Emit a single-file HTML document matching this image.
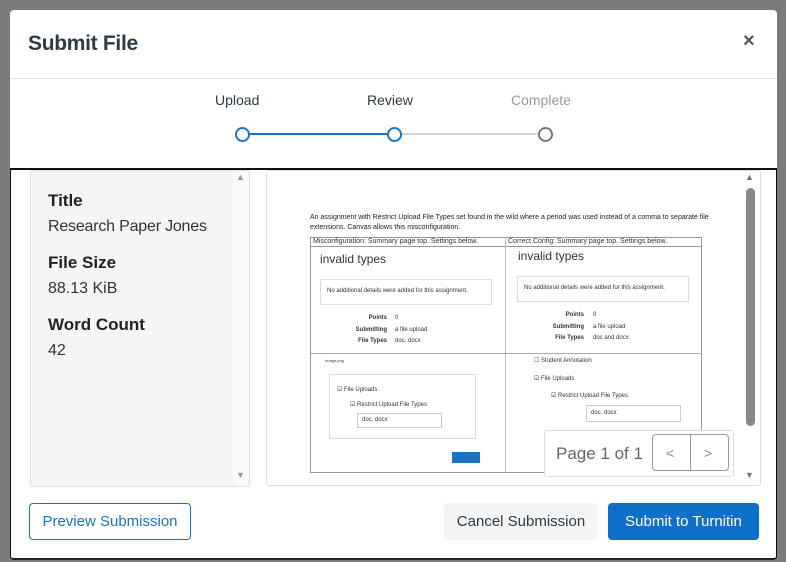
<!DOCTYPE html><html><head><style>
body{margin:0;width:786px;height:562px;background:#7b7b7b;font-family:"Liberation Sans",sans-serif;position:relative;overflow:hidden}
.a{position:absolute}
.dlg{left:10px;top:10px;width:767px;height:548px;background:#fff;border-radius:4px;border-bottom:2px solid #222}
.t{font-size:21px;color:#2d3b45;font-weight:bold;letter-spacing:-0.3px}
.sm{font-size:6px;color:#333}
</style></head><body>
<div class="a dlg"></div>
<div class="a" style="left:10px;top:78px;width:767px;height:1px;background:#dfe3e6"></div>
<div class="a t" style="left:28px;top:32px">Submit File</div>
<div class="a" style="left:743px;top:30px;font-size:20px;color:#555;font-weight:bold">×</div>
<div class="a" style="left:215px;top:92px;font-size:14px;color:#2d3b45">Upload</div>
<div class="a" style="left:367px;top:92px;font-size:14px;color:#2d3b45">Review</div>
<div class="a" style="left:511px;top:92px;font-size:14px;color:#999">Complete</div>
<div class="a" style="left:242px;top:133px;width:152px;height:2px;background:#1a73c0"></div>
<div class="a" style="left:394px;top:133px;width:152px;height:2px;background:#d5d5d5"></div>
<div class="a" style="left:235px;top:127px;width:11px;height:11px;border:2px solid #1a73c0;border-radius:50%;background:#fff"></div>
<div class="a" style="left:387px;top:127px;width:11px;height:11px;border:2px solid #1a73c0;border-radius:50%;background:#fff"></div>
<div class="a" style="left:538px;top:127px;width:11px;height:11px;border:2px solid #777;border-radius:50%;background:#fff"></div>
<div class="a" style="left:10px;top:168px;width:767px;height:2px;background:#111"></div>
<div class="a" style="left:10px;top:168px;width:1px;height:390px;background:#111"></div>
<div class="a" style="left:776px;top:168px;width:1px;height:390px;background:#111"></div>
<div class="a" style="left:30px;top:170px;width:218px;height:315px;background:#f5f5f5;border:1px solid #e0e0e0;border-radius:3px"></div>
<div class="a" style="left:233px;top:171px;width:15px;height:313px;background:#fafafa"></div>
<div class="a" style="left:236px;top:172px;font-size:9px;color:#999">▲</div>
<div class="a" style="left:236px;top:470px;font-size:9px;color:#999">▼</div>
<div class="a" style="left:48px;top:191px;font-size:17px;font-weight:bold;color:#222">Title</div>
<div class="a" style="left:48px;top:218px;font-size:16px;color:#333;letter-spacing:-0.2px">Research Paper Jones</div>
<div class="a" style="left:48px;top:253px;font-size:17px;font-weight:bold;color:#222">File Size</div>
<div class="a" style="left:48px;top:280px;font-size:16px;color:#333">88.13 KiB</div>
<div class="a" style="left:48px;top:315px;font-size:17px;font-weight:bold;color:#222">Word Count</div>
<div class="a" style="left:48px;top:342px;font-size:16px;color:#333">42</div>
<div class="a" style="left:266px;top:170px;width:493px;height:314px;background:#fff;border:1px solid #ddd;border-radius:3px"></div>
<div class="a" style="left:745px;top:172px;font-size:9px;color:#777">▲</div>
<div class="a" style="left:745px;top:470px;font-size:9px;color:#777">▼</div>
<div class="a" style="left:746px;top:188px;width:9px;height:238px;background:#888;border-radius:5px"></div>
<div class="a sm" style="left:310px;top:213px;font-size:7px;line-height:10px;width:400px;color:#222">An assignment with Restrict Upload File Types set found in the wild where a period was used instead of a comma to separate file extensions. Canvas allows this misconfiguration.</div>
<div class="a" style="left:310px;top:237px;width:390px;height:234px;border:1px solid #999"></div>
<div class="a" style="left:310px;top:246px;width:391px;height:1px;background:#999"></div>
<div class="a" style="left:505px;top:237px;width:1px;height:235px;background:#bbb"></div>
<div class="a" style="left:310px;top:353px;width:391px;height:1px;background:#aaa"></div>
<div class="a sm" style="left:313px;top:238px;font-size:7px">Misconfiguration: Summary page top. Settings below.</div>
<div class="a sm" style="left:508px;top:238px;font-size:7px">Correct Config: Summary page top. Settings below.</div>
<div class="a" style="left:320px;top:252px;font-size:12px;color:#333">invalid types</div>
<div class="a" style="left:518px;top:249px;font-size:12px;color:#333">invalid types</div>
<div class="a" style="left:320px;top:279px;width:170px;height:24px;border:1px solid #ddd"></div>
<div class="a" style="left:517px;top:276px;width:170px;height:24px;border:1px solid #ddd"></div>
<div class="a sm" style="left:327px;top:288px">No additional details were added for this assignment.</div>
<div class="a sm" style="left:524px;top:285px">No additional details were added for this assignment.</div>
<div class="a sm" style="left:355px;top:313px;text-align:right;width:32px;line-height:11.5px;font-weight:bold">Points<br>Submitting<br>File Types</div>
<div class="a sm" style="left:395px;top:313px;line-height:11.5px">0<br>a file upload<br>doc. docx</div>
<div class="a sm" style="left:552px;top:310px;text-align:right;width:32px;line-height:11.5px;font-weight:bold">Points<br>Submitting<br>File Types</div>
<div class="a sm" style="left:593px;top:310px;line-height:11.5px">0<br>a file upload<br>doc and docx</div>
<div class="a sm" style="left:325px;top:358px;font-size:4px">Image.png</div>
<div class="a" style="left:329px;top:374px;width:145px;height:63px;border:1px solid #ddd"></div>
<div class="a sm" style="left:337px;top:386px">☑ File Uploads</div>
<div class="a sm" style="left:350px;top:401px">☑ Restrict Upload File Types</div>
<div class="a" style="left:357px;top:413px;width:83px;height:13px;border:1px solid #ccc"></div>
<div class="a sm" style="left:362px;top:417px">doc. docx</div>
<div class="a" style="left:452px;top:452px;width:28px;height:11px;background:#1a73c0"></div>
<div class="a sm" style="left:534px;top:357px">☐ Student Annotation</div>
<div class="a sm" style="left:534px;top:375px">☑ File Uploads</div>
<div class="a sm" style="left:551px;top:392px">☑ Restrict Upload File Types</div>
<div class="a" style="left:586px;top:405px;width:93px;height:15px;border:1px solid #ccc"></div>
<div class="a sm" style="left:591px;top:410px">doc. docx</div>
<div class="a" style="left:544px;top:430px;width:188px;height:45px;background:#fff;border:1px solid #ddd;border-radius:3px"></div>
<div class="a" style="left:556px;top:444px;font-size:17px;color:#666">Page 1 of 1</div>
<div class="a" style="left:652px;top:434px;width:75px;height:35px;border:1px solid #999;border-radius:4px"></div>
<div class="a" style="left:690px;top:434px;width:1px;height:37px;background:#999"></div>
<div class="a" style="left:666px;top:445px;font-size:14px;color:#888">&lt;</div>
<div class="a" style="left:704px;top:445px;font-size:14px;color:#888">&gt;</div>
<div class="a" style="left:29px;top:503px;width:160px;height:35px;border:1px solid #1a73c0;border-radius:4px;color:#1a73c0;font-size:15px;line-height:35px;text-align:center">Preview Submission</div>
<div class="a" style="left:444px;top:503px;width:154px;height:37px;background:#f5f5f5;border-radius:4px;color:#2d3b45;font-size:15px;line-height:37px;text-align:center">Cancel Submission</div>
<div class="a" style="left:608px;top:503px;width:151px;height:37px;background:#0e70c9;border-radius:4px;color:#fff;font-size:15px;line-height:37px;text-align:center">Submit to Turnitin</div>
</body></html>
